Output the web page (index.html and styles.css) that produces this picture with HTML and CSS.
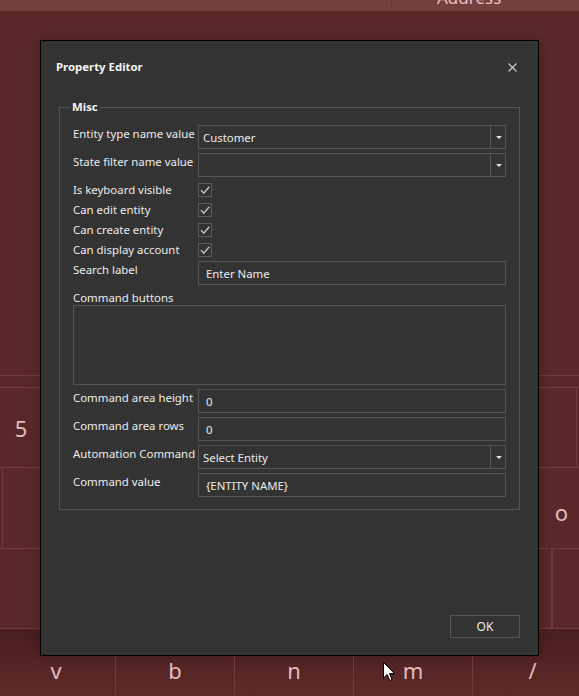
FILE: index.html
```html
<!DOCTYPE html>
<html lang="en">
<head>
    <meta charset="UTF-8">
    <meta name="viewport" content="width=device-width, initial-scale=1.0">
    <title>Property Editor</title>
    <link rel="stylesheet" href="styles.css">
</head>
<body>
    <div class="screen">
        <div class="topbar">
            <div class="topbar-left"></div>
            <div class="topbar-right"><span class="address">Address</span></div>
        </div>

        <!-- on-screen keyboard behind the dialog -->
        <div class="keyboard">
            <div class="kb-row kb-strip"></div>
            <div class="kb-row kb-num">
                <div class="key key-5">5</div>
                <div class="key key-fill"></div>
                <div class="key key-end"></div>
            </div>
            <div class="kb-row kb-top">
                <div class="key key-edge"></div>
                <div class="key key-fill"></div>
                <div class="key key-o">o</div>
            </div>
            <div class="kb-row kb-mid">
                <div class="key key-fill"></div>
                <div class="key key-wide"></div>
            </div>
            <div class="kb-row kb-bottom">
                <div class="key">v</div>
                <div class="key">b</div>
                <div class="key">n</div>
                <div class="key">m</div>
                <div class="key">/</div>
            </div>
        </div>
    </div>

    <div class="dialog">
        <div class="dialog-header">
            <span class="dialog-title">Property Editor</span>
            <svg class="close-icon" width="9" height="9" viewBox="0 0 9 9">
                <path d="M0.5 0.5 L8.5 8.5 M8.5 0.5 L0.5 8.5" stroke="#cfcfcf" stroke-width="1.1" fill="none"/>
            </svg>
        </div>

        <fieldset class="group">
            <legend>Misc</legend>

            <div class="prop-row">
                <div class="prop-label">Entity type name value</div>
                <div class="combo"><span class="combo-value">Customer</span><span class="combo-arrow"></span></div>
            </div>
            <div class="prop-row">
                <div class="prop-label">State filter name value</div>
                <div class="combo"><span class="combo-value"></span><span class="combo-arrow"></span></div>
            </div>

            <div class="prop-row check-row">
                <div class="prop-label">Is keyboard visible</div>
                <div class="checkbox"><svg viewBox="0 0 12 12" width="12" height="12"><path d="M2 6.3 L4.8 9.2 L10.2 2.8" stroke="#c4c4c4" stroke-width="1.4" fill="none"/></svg></div>
            </div>
            <div class="prop-row check-row">
                <div class="prop-label">Can edit entity</div>
                <div class="checkbox"><svg viewBox="0 0 12 12" width="12" height="12"><path d="M2 6.3 L4.8 9.2 L10.2 2.8" stroke="#c4c4c4" stroke-width="1.4" fill="none"/></svg></div>
            </div>
            <div class="prop-row check-row">
                <div class="prop-label">Can create entity</div>
                <div class="checkbox"><svg viewBox="0 0 12 12" width="12" height="12"><path d="M2 6.3 L4.8 9.2 L10.2 2.8" stroke="#c4c4c4" stroke-width="1.4" fill="none"/></svg></div>
            </div>
            <div class="prop-row check-row">
                <div class="prop-label">Can display account</div>
                <div class="checkbox"><svg viewBox="0 0 12 12" width="12" height="12"><path d="M2 6.3 L4.8 9.2 L10.2 2.8" stroke="#c4c4c4" stroke-width="1.4" fill="none"/></svg></div>
            </div>

            <div class="prop-row">
                <div class="prop-label">Search label</div>
                <div class="textbox">Enter Name</div>
            </div>

            <div class="prop-label block-label">Command buttons</div>
            <div class="list-box"></div>

            <div class="prop-row">
                <div class="prop-label">Command area height</div>
                <div class="textbox">0</div>
            </div>
            <div class="prop-row">
                <div class="prop-label">Command area rows</div>
                <div class="textbox">0</div>
            </div>
            <div class="prop-row">
                <div class="prop-label">Automation Command</div>
                <div class="combo"><span class="combo-value">Select Entity</span><span class="combo-arrow"></span></div>
            </div>
            <div class="prop-row last-row">
                <div class="prop-label">Command value</div>
                <div class="textbox">{ENTITY NAME}</div>
            </div>
        </fieldset>

        <div class="dialog-footer">
            <button class="ok-button">OK</button>
        </div>
    </div>

    <svg class="cursor" width="13" height="20" viewBox="0 0 13 20">
        <path d="M0.5 0.5 L0.5 16 L4.2 12.4 L6.8 18.5 L9 17.6 L6.5 11.6 L11.5 11.6 Z" fill="#fff" stroke="#000" stroke-width="1"/>
    </svg>
</body>
</html>
```

FILE: styles.css
```css
* {
    margin: 0;
    padding: 0;
    box-sizing: border-box;
}

body {
    width: 579px;
    height: 696px;
    overflow: hidden;
    position: relative;
    font-family: 'Segoe UI', 'Noto Sans', sans-serif;
    background: #5a2828;
}

/* background app */
.screen {
    width: 579px;
    height: 696px;
    overflow: hidden;
    background: #5a2828;
}

.topbar {
    height: 11px;
    background: #733f3f;
    display: flex;
    overflow: hidden;
}

.topbar-left {
    width: 392px;
    border-right: 1px solid #6a3636;
}

.topbar-right {
    padding-left: 45px;
}

.address {
    display: block;
    margin-top: -11px;
    font-size: 17px;
    line-height: 17px;
    color: #e6c3c3;
}

.keyboard {
    margin-top: 364px;
    display: flex;
    flex-direction: column;
}

.kb-row {
    display: flex;
    border-top: 1px solid #713b3b;
}

.kb-strip {
    height: 12px;
}

.kb-num {
    height: 80px;
}

.kb-top {
    height: 81px;
}

.kb-mid {
    height: 80px;
}

.kb-bottom {
    height: 68px;
    margin-left: -3px;
    background: linear-gradient(180deg, #4a1e1e 0%, #5f2a2a 100%);
}

.key {
    flex: 0 0 119px;
    display: flex;
    align-items: center;
    justify-content: center;
    font-size: 22px;
    color: #e3bcbc;
    border-right: 1px solid #713b3b;
}

.kb-bottom .key {
    padding-top: 14px;
}

.kb-bottom .key:last-child {
    border-right: none;
}

.key-5 {
    flex-basis: 42px;
    border-right: none;
    padding-top: 1px;
}

.key-fill {
    flex: 1 1 auto;
}

.key-end {
    flex-basis: 2px;
    border-right: none;
}

.kb-num .key-fill {
    border-right: 1px solid #713b3b;
}

.key-edge {
    flex-basis: 3px;
}

.kb-top .key-fill {
    border-right: none;
}

.key-o {
    flex-basis: 119px;
    margin-right: -42px;
    border-right: none;
    padding-top: 8px;
}

.kb-mid .key-fill {
    flex: 0 0 552px;
}

.key-wide {
    border-right: none;
    border-left: 1px solid #713b3b;
}

/* dialog */
.dialog {
    position: absolute;
    left: 40px;
    top: 40px;
    width: 499px;
    height: 616px;
    background: #333333;
    border: 1px solid #000;
    box-shadow: 0 0 12px rgba(0, 0, 0, 0.25);
    padding: 18px 18px 17px 18px;
    display: flex;
    flex-direction: column;
    color: #ececec;
    font-size: 11.4px;
}

.dialog-header {
    display: flex;
    justify-content: space-between;
    align-items: center;
    height: 16px;
}

.dialog-title {
    margin-left: -3px;
    font-weight: 700;
    line-height: 16px;
    color: #f4f4f4;
}

.close-icon {
    margin-right: 3px;
}

.group {
    margin-top: 24px;
    border: 1px solid #555;
    padding: 10px 13px 12px 13px;
}

.group legend {
    margin-left: -3px;
    padding: 0 2px;
    font-weight: 700;
    line-height: 16px;
    color: #f4f4f4;
}

.prop-row {
    display: grid;
    grid-template-columns: 125px 1fr;
    height: 24px;
    margin-bottom: 4px;
}

.check-row {
    height: 20px;
    margin-bottom: 0;
}

.last-row {
    margin-bottom: 0;
}

.prop-label {
    line-height: 16px;
    padding-top: 1px;
    white-space: nowrap;
}

.block-label {
    height: 16px;
}

.combo {
    display: flex;
    border: 1px solid #555;
    height: 24px;
}

.combo-value {
    flex: 1;
    padding-left: 4px;
    padding-top: 2px;
    line-height: 20px;
}

.combo-arrow {
    width: 15px;
    border-left: 1px solid #555;
    display: flex;
    align-items: center;
    justify-content: center;
}

.combo-arrow::after {
    content: "";
    border-left: 3px solid transparent;
    border-right: 3px solid transparent;
    border-top: 3px solid #e0e0e0;
    margin-left: 1px;
}

.textbox {
    border: 1px solid #555;
    height: 24px;
    padding-left: 7px;
    padding-top: 2px;
    line-height: 20px;
}

.checkbox {
    width: 14px;
    height: 14px;
    margin-top: 2px;
    border: 1px solid #5a5a5a;
    display: flex;
    align-items: center;
    justify-content: center;
}

.list-box {
    height: 80px;
    border: 1px solid #555;
    margin-bottom: 4px;
}

.dialog-footer {
    margin-top: auto;
    display: flex;
    justify-content: flex-end;
}

.ok-button {
    width: 70px;
    height: 23px;
    background: transparent;
    border: 1px solid #555;
    color: #ececec;
    font-family: inherit;
    font-size: 12px;
}

.cursor {
    position: absolute;
    left: 383px;
    top: 662px;
}
```
